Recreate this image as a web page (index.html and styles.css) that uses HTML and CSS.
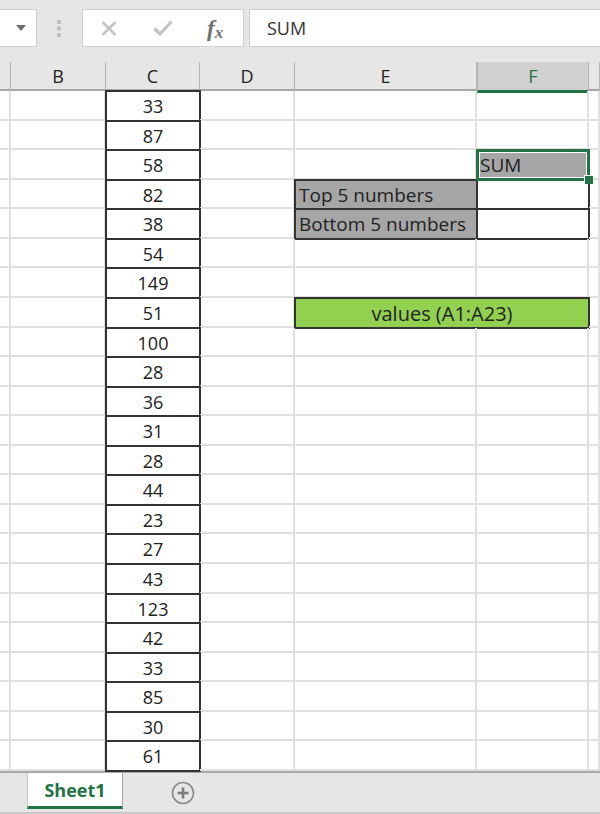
FILE: index.html
```html
<!DOCTYPE html>
<html lang="en">
<head>
<title>Sheet1</title>
<meta name="viewport" content="width=device-width, initial-scale=1.0">
<link rel="stylesheet" href="styles.css">
</head>
<body>

<div class="barra-formula">
    <div class="nombre">
        <svg width="10" height="6" viewBox="0 0 10 6"><path d="M0 0H10L5 6Z" fill="#6e6e6e"/></svg>
    </div>
    <svg class="puntos" width="4" height="17" viewBox="0 0 4 17"><path d="M0 0H4V4H0ZM0 6.5H4V10.5H0ZM0 13H4V17H0Z" fill="#c0c0c0"/></svg>
    <div class="botones">
        <svg width="16" height="15" viewBox="0 0 16 15"><path d="M1.5 1L14.5 14M14.5 1L1.5 14" stroke="#c4c4c4" stroke-width="2.6" fill="none"/></svg>
        <svg width="20" height="16" viewBox="0 0 20 16"><path d="M1.5 8.5L7 14L18.5 1.5" stroke="#c4c4c4" stroke-width="3.2" fill="none"/></svg>
        <span class="fx">f<sub>x</sub></span>
    </div>
    <div class="formula">SUM</div>
</div>

<div class="cabecera">
    <div class="col"></div>
    <div class="col">B</div>
    <div class="col">C</div>
    <div class="col">D</div>
    <div class="col">E</div>
    <div class="col activa">F</div>
    <div class="col"></div>
</div>

<div class="hoja">
    <div></div><div></div><div class="n">33</div><div></div><div></div><div class="f"></div><div></div>
    <div></div><div></div><div class="n">87</div><div></div><div></div><div class="f"></div><div></div>
    <div></div><div></div><div class="n">58</div><div></div><div></div><div class="f gris sel">SUM<span class="asa"></span></div><div></div>
    <div></div><div></div><div class="n">82</div><div></div><div class="t gris">Top 5 numbers</div><div class="t"></div><div></div>
    <div></div><div></div><div class="n">38</div><div></div><div class="t gris">Bottom 5 numbers</div><div class="t"></div><div></div>
    <div></div><div></div><div class="n">54</div><div></div><div></div><div class="f"></div><div></div>
    <div></div><div></div><div class="n">149</div><div></div><div></div><div class="f"></div><div></div>
    <div></div><div></div><div class="n">51</div><div></div><div class="t verde">values (A1:A23)</div><div></div>
    <div></div><div></div><div class="n">100</div><div></div><div></div><div class="f"></div><div></div>
    <div></div><div></div><div class="n">28</div><div></div><div></div><div class="f"></div><div></div>
    <div></div><div></div><div class="n">36</div><div></div><div></div><div class="f"></div><div></div>
    <div></div><div></div><div class="n">31</div><div></div><div></div><div class="f"></div><div></div>
    <div></div><div></div><div class="n">28</div><div></div><div></div><div class="f"></div><div></div>
    <div></div><div></div><div class="n">44</div><div></div><div></div><div class="f"></div><div></div>
    <div></div><div></div><div class="n">23</div><div></div><div></div><div class="f"></div><div></div>
    <div></div><div></div><div class="n">27</div><div></div><div></div><div class="f"></div><div></div>
    <div></div><div></div><div class="n">43</div><div></div><div></div><div class="f"></div><div></div>
    <div></div><div></div><div class="n">123</div><div></div><div></div><div class="f"></div><div></div>
    <div></div><div></div><div class="n">42</div><div></div><div></div><div class="f"></div><div></div>
    <div></div><div></div><div class="n">33</div><div></div><div></div><div class="f"></div><div></div>
    <div></div><div></div><div class="n">85</div><div></div><div></div><div class="f"></div><div></div>
    <div></div><div></div><div class="n">30</div><div></div><div></div><div class="f"></div><div></div>
    <div></div><div></div><div class="n">61</div><div></div><div></div><div class="f"></div><div></div>
</div>

<div class="pestanas">
    <div class="pestana">Sheet1</div>
    <svg class="nueva" width="24" height="24" viewBox="0 0 24 24">
        <circle cx="12" cy="12" r="10.5" fill="none" stroke="#8c8c8c" stroke-width="1.6"/>
        <path d="M12 6.5V17.5M6.5 12H17.5" stroke="#7a7a7a" stroke-width="2.6" fill="none"/>
    </svg>
</div>

</body>
</html>
```

FILE: styles.css
```css
* {
    box-sizing: border-box;
}

body {
    margin: 0;
    width: 600px;
    height: 814px;
    overflow: hidden;
    background: #e6e6e6;
    color: #222;
    font-family: "Open Sans", Lato, sans-serif;
    font-size: 18px;
}

.barra-formula {
    height: 62px;
    padding-top: 9px;
    display: flex;
    align-items: flex-start;
}

.nombre {
    width: 37px;
    height: 38px;
    background: #fff;
    border: 1px solid #d0d0d0;
    border-left: none;
    display: flex;
    align-items: center;
    justify-content: flex-end;
    padding-right: 10px;
}

.puntos {
    margin: 11px 0 0 20px;
}

.botones {
    width: 162px;
    height: 38px;
    margin-left: 21px;
    background: #fff;
    border: 1px solid #d0d0d0;
    display: flex;
    align-items: center;
    padding-left: 18px;
}

.botones svg:nth-child(2) {
    margin-left: 36px;
}

.fx {
    margin-left: 34px;
    font-family: "Liberation Serif", serif;
    font-style: italic;
    font-weight: bold;
    font-size: 23px;
    line-height: 1;
    color: #707070;
}

.fx sub {
    font-size: 17px;
    vertical-align: -2px;
    line-height: 0;
}

.formula {
    flex: 1;
    height: 38px;
    margin-left: 5px;
    background: #fff;
    border: 1px solid #d0d0d0;
    border-right: none;
    padding-left: 17px;
    line-height: 37px;
    color: #333;
}

.cabecera {
    height: 29px;
    display: grid;
    grid-template-columns: 11px 95px 94px 95px 182px 112px 11px;
    border-bottom: 2px solid #a8a8a8;
}

.col {
    border-right: 1px solid #b4b4b4;
    text-align: center;
    line-height: 28px;
}

.col.activa {
    background: #d0d0d0;
    color: #217346;
    margin-bottom: -2px;
    border-bottom: 3px solid #217346;
    border-left: 1px solid #b4b4b4;
}

.hoja {
    height: 680px;
    background: #fff;
    display: grid;
    grid-template-columns: 11px 95px 94px 95px 182px 112px 11px;
    grid-template-rows: repeat(23, minmax(0, 1fr));
}

.hoja > div {
    border-right: 2px solid #e0e0e0;
    border-bottom: 2px solid #e0e0e0;
    line-height: 31px;
    white-space: nowrap;
}

.hoja > .n,
.hoja > .t {
    outline: 2px solid #333;
    outline-offset: -1px;
    border: none;
}

.n {
    text-align: center;
}

.t {
    padding-left: 4px;
    font-size: 19px;
}

.gris {
    background: #a6a6a6;
}

.hoja > .verde {
    grid-column: span 2;
    padding-left: 0;
    background: #92d050;
    font-size: 20px;
    text-align: center;
}

.hoja > .sel {
    position: relative;
    padding-left: 3px;
    border: none;
    font-size: 19px;
    outline: 3px solid #217346;
    outline-offset: -2px;
    box-shadow: inset 0 0 0 3px #fff;
    z-index: 1;
}

.asa {
    position: absolute;
    right: -4px;
    bottom: -4px;
    width: 9px;
    height: 9px;
    background: #217346;
    border-top: 1px solid #fff;
    border-left: 1px solid #fff;
}

.pestanas {
    height: 43px;
    border-top: 2px solid #a8a8a8;
    border-bottom: 2px solid #c8c8c8;
    display: flex;
    align-items: flex-start;
}

.pestana {
    width: 96px;
    height: 36px;
    margin-left: 27px;
    background: #fff;
    border-right: 1px solid #a8a8a8;
    border-left: 1px solid #c8c8c8;
    border-bottom: 3px solid #217346;
    color: #217346;
    font-weight: bold;
    text-align: center;
    line-height: 35px;
}

.nueva {
    margin: 8px 0 0 48px;
}
```
